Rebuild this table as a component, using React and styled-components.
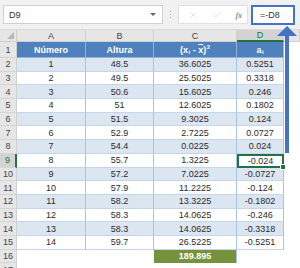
import React from 'react';
import styled, { createGlobalStyle } from 'styled-components';
import { X, Check } from 'lucide-react';

const GlobalStyle = createGlobalStyle`
  html, body {
    margin: 0;
    padding: 0;
    background: #ffffff;
  }
  body {
    font-family: 'Liberation Sans', Arial, sans-serif;
  }
`;

const Sheet = styled.div`
  position: relative;
  width: 300px;
  height: 268px;
  overflow: hidden;
  background: #ffffff;
`;

const FormulaBar = styled.div`
  display: flex;
  align-items: center;
  height: 30px;
  padding: 0 3px;
  box-sizing: border-box;
  background: #f1f1f1;
  border-bottom: 1px solid #dadada;
`;

const NameBox = styled.div`
  display: flex;
  align-items: center;
  justify-content: space-between;
  width: 160px;
  height: 19px;
  box-sizing: border-box;
  padding: 0 6px 0 5px;
  background: #ffffff;
  border: 1px solid #d0d0d0;
  font-size: 9px;
  color: #333;
`;

const Caret = styled.span`
  width: 0;
  height: 0;
  border-left: 3px solid transparent;
  border-right: 3px solid transparent;
  border-top: 3px solid #666;
`;

const Grip = styled.div`
  display: flex;
  flex-direction: column;
  gap: 2px;
  margin: 0 7px;
  span {
    width: 1px;
    height: 1px;
    background: #b0b0b0;
  }
`;

const ButtonBox = styled.div`
  display: flex;
  align-items: center;
  justify-content: space-between;
  width: 70px;
  height: 19px;
  box-sizing: border-box;
  padding: 0 5px 0 9px;
  background: #ffffff;
  border: 1px solid #e0e0e0;
  color: #c4c4c4;
`;

const Fx = styled.span`
  font-family: 'Liberation Serif', 'Times New Roman', serif;
  font-style: italic;
  font-size: 9px;
  color: #666;
`;

const FormulaInput = styled.div`
  display: flex;
  align-items: center;
  margin-left: 3px;
  width: 44px;
  height: 20px;
  box-sizing: border-box;
  padding-left: 7px;
  background: #ffffff;
  border: 2px solid #4472c4;
  font-size: 9px;
  color: #333;
`;

const Grid = styled.div`
  display: grid;
  grid-template-columns: 17px 69px 68px 83px 47px 1fr;
  grid-template-rows: 12px 16px repeat(16, 13.7px);
  font-size: 9px;
`;

const Corner = styled.div`
  position: relative;
  background: #e6e6e6;
  border-right: 1px solid #cfcfcf;
  border-bottom: 1px solid #cfcfcf;
  box-sizing: border-box;
  &::after {
    content: '';
    position: absolute;
    right: 2px;
    bottom: 2px;
    border-left: 7px solid transparent;
    border-bottom: 7px solid #b8b8b8;
  }
`;

const ColHead = styled.div`
  display: flex;
  align-items: center;
  justify-content: center;
  box-sizing: border-box;
  background: ${(p) => (p.$active ? '#d3d3d3' : '#e6e6e6')};
  color: ${(p) => (p.$active ? '#217346' : '#444')};
  border-right: 1px solid #cfcfcf;
  border-bottom: ${(p) => (p.$active ? '2px solid #217346' : '1px solid #cfcfcf')};
`;

const RowHead = styled.div`
  display: flex;
  align-items: center;
  justify-content: center;
  box-sizing: border-box;
  background: ${(p) => (p.$active ? '#d3d3d3' : '#e6e6e6')};
  color: ${(p) => (p.$active ? '#217346' : '#444')};
  border-bottom: 1px solid #d4d4d4;
  border-right: ${(p) => (p.$active ? '2px solid #217346' : '1px solid #cfcfcf')};
`;

const HeadCell = styled.div`
  display: flex;
  align-items: center;
  justify-content: center;
  box-sizing: border-box;
  background: #4f81bd;
  color: #ffffff;
  font-weight: bold;
  border-right: 1px solid #95b3d7;
  border-bottom: 1px solid #95b3d7;
`;

const Cell = styled.div`
  display: flex;
  align-items: center;
  justify-content: center;
  box-sizing: border-box;
  background: ${(p) => (p.$striped ? '#dce6f1' : '#ffffff')};
  color: #2b2b2b;
  border-right: 1px solid #a9c2e2;
  border-bottom: 1px solid #c5d6ec;
`;

const SelectedCell = styled(Cell)`
  position: relative;
  border: 2px solid #217346;
  &::after {
    content: '';
    position: absolute;
    right: -4px;
    bottom: -4px;
    width: 4px;
    height: 4px;
    background: #217346;
    border: 1px solid #ffffff;
  }
`;

const Blank = styled.div`
  background: #ffffff;
`;

const TotalCell = styled.div`
  display: flex;
  align-items: center;
  justify-content: center;
  background: #76923c;
  color: #ffffff;
  font-weight: bold;
  border-right: 1px solid #a9c2e2;
`;

const Arrow = styled.svg`
  position: absolute;
  left: 276px;
  top: 25px;
`;

const Sub = styled.span`
  font-size: 6px;
  position: relative;
  top: 2px;
  margin-left: 0.5px;
`;

const Sup = styled.span`
  font-size: 6px;
  position: relative;
  top: -3px;
  margin-left: 0.5px;
`;

const Bar = styled.span`
  text-decoration: overline;
`;

const data = [
  [1, '48.5', '36.6025', '0.5251'],
  [2, '49.5', '25.5025', '0.3318'],
  [3, '50.6', '15.6025', '0.246'],
  [4, '51', '12.6025', '0.1802'],
  [5, '51.5', '9.3025', '0.124'],
  [6, '52.9', '2.7225', '0.0727'],
  [7, '54.4', '0.0225', '0.024'],
  [8, '55.7', '1.3225', '-0.024'],
  [9, '57.2', '7.0225', '-0.0727'],
  [10, '57.9', '11.2225', '-0.124'],
  [11, '58.2', '13.3225', '-0.1802'],
  [12, '58.3', '14.0625', '-0.246'],
  [13, '58.3', '14.0625', '-0.3318'],
  [14, '59.7', '26.5225', '-0.5251']
];

export default function App() {
  return (
    <Sheet>
      <GlobalStyle />
      <FormulaBar>
        <NameBox>
          D9
          <Caret />
        </NameBox>
        <Grip>
          <span />
          <span />
          <span />
        </Grip>
        <ButtonBox>
          <X size={10} strokeWidth={1.2} />
          <Check size={10} strokeWidth={1.2} />
          <Fx>fx</Fx>
        </ButtonBox>
        <FormulaInput>=-D8</FormulaInput>
      </FormulaBar>
      <Grid>
        <Corner />
        <ColHead>A</ColHead>
        <ColHead>B</ColHead>
        <ColHead>C</ColHead>
        <ColHead $active>D</ColHead>
        <ColHead />

        <RowHead>1</RowHead>
        <HeadCell>Número</HeadCell>
        <HeadCell>Altura</HeadCell>
        <HeadCell>
          (x<Sub>i</Sub>&nbsp;-&nbsp;<Bar>x</Bar>)<Sup>2</Sup>
        </HeadCell>
        <HeadCell>
          a<Sub>i</Sub>
        </HeadCell>
        <Blank />

        {data.map(([n, h, d, a], i) => {
          const row = i + 2;
          const striped = row % 2 === 0;
          return (
            <React.Fragment key={row}>
              <RowHead $active={row === 9}>{row}</RowHead>
              <Cell $striped={striped}>{n}</Cell>
              <Cell $striped={striped}>{h}</Cell>
              <Cell $striped={striped}>{d}</Cell>
              {row === 9 ? (
                <SelectedCell>{a}</SelectedCell>
              ) : (
                <Cell $striped={striped}>{a}</Cell>
              )}
              <Blank />
            </React.Fragment>
          );
        })}

        <RowHead>16</RowHead>
        <Blank />
        <Blank />
        <TotalCell>189.895</TotalCell>
        <Blank />
        <Blank />

        <RowHead>17</RowHead>
        <Blank />
        <Blank />
        <Blank />
        <Blank />
        <Blank />
      </Grid>
      <Arrow width="22" height="130" viewBox="0 0 22 130">
        <polygon points="11,1 1,11 21,11" fill="#4472c4" />
        <rect x="9" y="10" width="4" height="118" fill="#4472c4" />
      </Arrow>
    </Sheet>
  );
}
